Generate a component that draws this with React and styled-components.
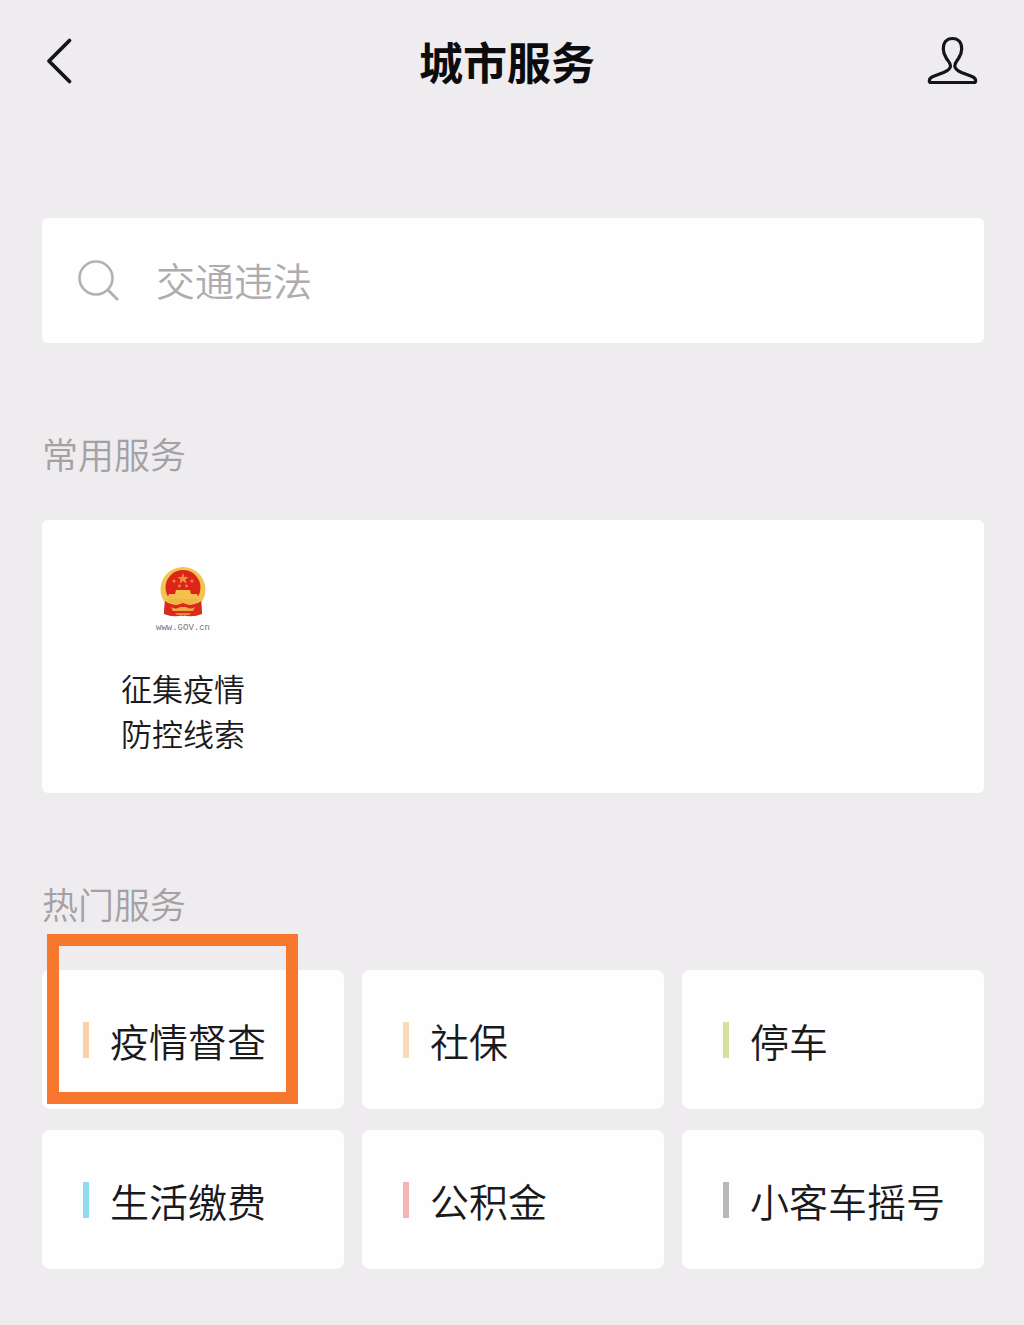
import React, { useState } from 'react';
import styled, { createGlobalStyle } from 'styled-components';

const hotServices = [
  { name: '疫情督查', color: '#fbd0ab', active: true },
  { name: '社保', color: '#f8d9b8' },
  { name: '停车', color: '#d3e39b' },
  { name: '生活缴费', color: '#8fdcec' },
  { name: '公积金', color: '#f3b5b5' },
  { name: '小客车摇号', color: '#b9b7ba' },
];

const BackIcon = () => (
  <svg width="28" height="48" viewBox="0 0 28 48" fill="none" aria-hidden="true">
    <path d="M23.500 3.500 L3 24 L23.500 44.500" stroke="#151416" strokeWidth="3.800" strokeLinecap="round" strokeLinejoin="round" />
  </svg>
);

const UserIcon = () => (
  <svg width="52" height="50" viewBox="0 0 52 50" fill="none" aria-hidden="true">
    <path
      d="M26.500 2.500 C20.500 2.500 17.300 6.500 17.300 13 C17.300 17 18.500 19.500 20.500 22.500 C22.500 25.500 24.500 27 24.500 30 C24.500 33 22 34.500 17.500 36.500 L7 40.500 C4 41.700 3.300 43 3.300 45 C3.300 46.200 3.700 46.500 5 46.500 H48 C49.300 46.500 49.700 46.200 49.700 45 C49.700 43 49 41.700 46 40.500 L35.500 36.500 C31 34.500 28.800 33 28.800 30 C28.800 27 30.500 25.500 32.500 22.500 C34.500 19.500 35.700 17 35.700 13 C35.700 6.500 32.500 2.500 26.500 2.500 Z"
      stroke="#151416"
      strokeWidth="3.200"
      strokeLinejoin="round"
    />
  </svg>
);

const SearchIcon = () => (
  <svg width="44" height="44" viewBox="0 0 44 44" fill="none" aria-hidden="true">
    <circle cx="19" cy="19" r="16.500" stroke="#b2b0b2" strokeWidth="2.600" />
    <path d="M30.500 30.500 L41 41" stroke="#b2b0b2" strokeWidth="2.800" />
  </svg>
);

const Emblem = () => (
  <svg width="60" height="66" viewBox="0 0 60 66" aria-hidden="true">
    <path d="M12 34 H48 L49 48 Q39 52 30 49 Q21 52 11 48 Z" fill="#d92a1c" />
    <circle cx="30" cy="23.500" r="22.500" fill="#f0c552" />
    <circle cx="30" cy="21.500" r="17.500" fill="#dc2419" />
    <path d="M30 7 L31.500 11 L35.500 11 L32.500 13.500 L33.500 17.500 L30 15 L26.500 17.500 L27.500 13.500 L24.500 11 L28.500 11 Z" fill="#f0913f" />
    <g fill="#ee853a">
      <circle cx="21" cy="15" r="1.600" />
      <circle cx="39" cy="15" r="1.600" />
      <circle cx="26.500" cy="20" r="1.400" />
      <circle cx="33.500" cy="20" r="1.400" />
    </g>
    <path d="M23 24 H37 L38 28 H44 L46 33 H14 L16 28 H22 Z" fill="#f4c04c" />
    <path d="M12 35 Q18 40 24 37 H36 Q42 40 48 35 L49 48 L41 46 L30 50 L19 46 L11 48 Z" fill="#d92a1c" />
    <path d="M14 33 H46 Q43 39 36 39 L30 37 L24 39 Q17 39 14 33 Z" fill="#f1b645" />
    <path d="M18 41 Q23 44 27 41 H33 Q37 44 42 41 L40 45 H20 Z" fill="#efa94a" />
    <path d="M22 47 H38 L36 49 H24 Z" fill="#e98a3c" />
    <text x="30" y="64" textAnchor="middle" fontFamily="'Liberation Mono', monospace" fontSize="9" fill="#77757d">
      www.GOV.cn
    </text>
  </svg>
);

const App = () => {
  const [keyword, setKeyword] = useState('');

  return (
    <>
      <GlobalStyle />
      <Header>
        <IconButton type="button" aria-label="返回">
          <BackIcon />
        </IconButton>
        <Title>城市服务</Title>
        <IconButton type="button" aria-label="我的">
          <UserIcon />
        </IconButton>
      </Header>
      <Main>
        <SearchBox>
          <SearchIcon />
          <SearchInput
            type="text"
            aria-label="搜索"
            placeholder="交通违法"
            value={keyword}
            onChange={(e) => setKeyword(e.target.value)}
          />
        </SearchBox>

        <Section>
          <SectionTitle>常用服务</SectionTitle>
          <CommonCard>
            <CommonItem href="#clue">
              <Emblem />
              <CommonName>
                征集疫情
                <br />
                防控线索
              </CommonName>
            </CommonItem>
          </CommonCard>
        </Section>

        <Section>
          <SectionTitle>热门服务</SectionTitle>
          <HotGrid>
            {hotServices.map((service) => (
              <HotItem type="button" key={service.name}>
                <Bar $color={service.color} />
                {service.name}
                {service.active && <Highlight />}
              </HotItem>
            ))}
          </HotGrid>
        </Section>
      </Main>
    </>
  );
};

export default App;

const GlobalStyle = createGlobalStyle`
  * {
    box-sizing: border-box;
  }

  body {
    margin: 0;
    background: #eeecee;
    color: #1a191b;
    font-family: 'Noto Sans CJK SC', sans-serif;
  }

  button, input {
    font-family: inherit;
    color: inherit;
  }
`;

const Header = styled.header`
  display: flex;
  align-items: center;
  justify-content: space-between;
  height: 122px;
  padding: 0 46px;
`;

const IconButton = styled.button`
  display: flex;
  padding: 0;
  border: 0;
  background: none;
  cursor: pointer;

  &:first-child {
    width: 42px;
  }
`;

const Title = styled.h1`
  margin: 0;
  font-size: 44px;
  line-height: 64px;
  font-weight: 700;
  color: #0c0b0d;
`;

const Main = styled.main`
  padding: 96px 40px 54px 42px;
`;

const SearchBox = styled.label`
  display: flex;
  align-items: center;
  gap: 35px;
  height: 125px;
  padding: 0 35px;
  border-radius: 6px;
  background: #fefefe;
`;

const SearchInput = styled.input`
  flex: 1;
  min-width: 0;
  padding: 0 0 4px;
  border: 0;
  outline: 0;
  background: none;
  font-size: 39px;
  line-height: 58px;
  font-weight: 350;

  &::placeholder {
    color: #aeacae;
    opacity: 1;
  }
`;

const Section = styled.section`
  margin-top: 83px;
`;

const SectionTitle = styled.h2`
  margin: 0 0 40px;
  font-size: 36px;
  line-height: 54px;
  font-weight: 350;
  color: #a3a1a3;
`;

const CommonCard = styled.div`
  display: grid;
  grid-template-columns: repeat(4, 1fr);
  padding: 46px 31px 38px;
  border-radius: 6px;
  background: #fefefe;
`;

const CommonItem = styled.a`
  display: flex;
  flex-direction: column;
  align-items: center;
  gap: 33px;
  color: inherit;
  text-decoration: none;
`;

const CommonName = styled.span`
  font-size: 31px;
  line-height: 45px;
  font-weight: 350;
  text-align: center;
`;

const HotGrid = styled.div`
  display: grid;
  grid-template-columns: repeat(3, 1fr);
  gap: 21px 18px;
`;

const HotItem = styled.button`
  position: relative;
  display: flex;
  align-items: center;
  gap: 21px;
  height: 139px;
  padding: 0 0 0 41px;
  border: 0;
  border-radius: 8px;
  background: #fefefe;
  font-size: 39px;
  line-height: 58px;
  font-weight: 350;
  white-space: nowrap;
  cursor: pointer;
`;

const Bar = styled.span`
  width: 6px;
  height: 36px;
  background: ${({ $color }) => $color};
`;

// 橙色提示框，盖在卡片上方
const Highlight = styled.span`
  position: absolute;
  top: -36px;
  left: 5px;
  width: 251px;
  height: 170px;
  border: 12px solid #f8772f;
  pointer-events: none;
`;
